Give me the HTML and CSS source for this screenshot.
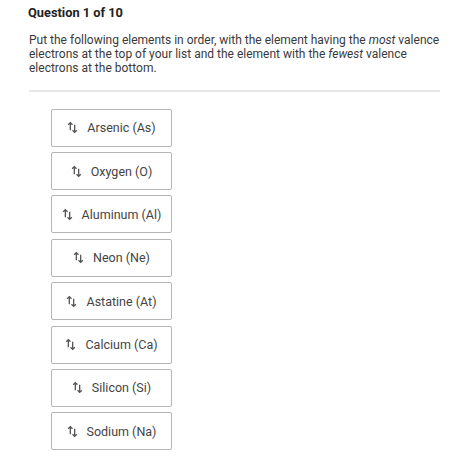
FILE: index.html
```html
<!DOCTYPE html>
<html lang="en">
<head>
    <meta charset="UTF-8">
    <title>Question 1 of 10</title>
    <link rel="stylesheet" href="styles.css">
</head>
<body>
    <div class="quiz">
        <h2 class="quiz-title">Question 1 of 10</h2>
        <p class="quiz-prompt">Put the following elements in order, with the element having the <em>most</em> valence electrons at the top of your list and the element with the <em>fewest</em> valence electrons at the bottom.</p>
        <hr class="divider">
        <ul class="order-list">
            <li class="order-item"><svg class="handle" viewBox="0 0 10 12"><path d="M3 8.5V1.5M1 3.5 3 1.5l2 2M7 3.5v7M5 8.5 7 10.5l2-2"/></svg>Arsenic (As)</li>
            <li class="order-item"><svg class="handle" viewBox="0 0 10 12"><path d="M3 8.5V1.5M1 3.5 3 1.5l2 2M7 3.5v7M5 8.5 7 10.5l2-2"/></svg>Oxygen (O)</li>
            <li class="order-item"><svg class="handle" viewBox="0 0 10 12"><path d="M3 8.5V1.5M1 3.5 3 1.5l2 2M7 3.5v7M5 8.5 7 10.5l2-2"/></svg>Aluminum (Al)</li>
            <li class="order-item"><svg class="handle" viewBox="0 0 10 12"><path d="M3 8.5V1.5M1 3.5 3 1.5l2 2M7 3.5v7M5 8.5 7 10.5l2-2"/></svg>Neon (Ne)</li>
            <li class="order-item"><svg class="handle" viewBox="0 0 10 12"><path d="M3 8.5V1.5M1 3.5 3 1.5l2 2M7 3.5v7M5 8.5 7 10.5l2-2"/></svg>Astatine (At)</li>
            <li class="order-item"><svg class="handle" viewBox="0 0 10 12"><path d="M3 8.5V1.5M1 3.5 3 1.5l2 2M7 3.5v7M5 8.5 7 10.5l2-2"/></svg>Calcium (Ca)</li>
            <li class="order-item"><svg class="handle" viewBox="0 0 10 12"><path d="M3 8.5V1.5M1 3.5 3 1.5l2 2M7 3.5v7M5 8.5 7 10.5l2-2"/></svg>Silicon (Si)</li>
            <li class="order-item"><svg class="handle" viewBox="0 0 10 12"><path d="M3 8.5V1.5M1 3.5 3 1.5l2 2M7 3.5v7M5 8.5 7 10.5l2-2"/></svg>Sodium (Na)</li>
        </ul>
    </div>
</body>
</html>
```

FILE: styles.css
```css
body {
    margin: 0;
    font-family: Roboto, "Liberation Sans", sans-serif;
    background-color: #fff;
    color: #333;
}
.quiz {
    padding: 4px 30px 0 29px;
}
.quiz-title {
    margin: 0 0 0 -1px;
    font-size: 12.8px;
    font-weight: 700;
    color: #222;
    line-height: 18px;
}
.quiz-prompt {
    margin: 11px 0 0;
    font-size: 12px;
    line-height: 14.2px;
    color: #3a3a3a;
}
.quiz-prompt em {
    font-style: italic;
}
.divider {
    border: none;
    border-top: 2px solid #e6e6e6;
    margin: 14px 4px 0 0;
}
.order-list {
    list-style: none;
    margin: 17px 0 0 22px;
    padding: 0;
    display: flex;
    flex-direction: column;
    gap: 5.4px;
}
.order-item {
    box-sizing: border-box;
    width: 121px;
    height: 38px;
    border: 1px solid #b5b5b5;
    border-radius: 2px;
    display: flex;
    align-items: center;
    justify-content: center;
    font-size: 12.5px;
    color: #444;
}
.handle {
    width: 11px;
    height: 13px;
    margin-right: 9px;
    fill: none;
    stroke: #555;
    stroke-width: 1.2;
}
```
